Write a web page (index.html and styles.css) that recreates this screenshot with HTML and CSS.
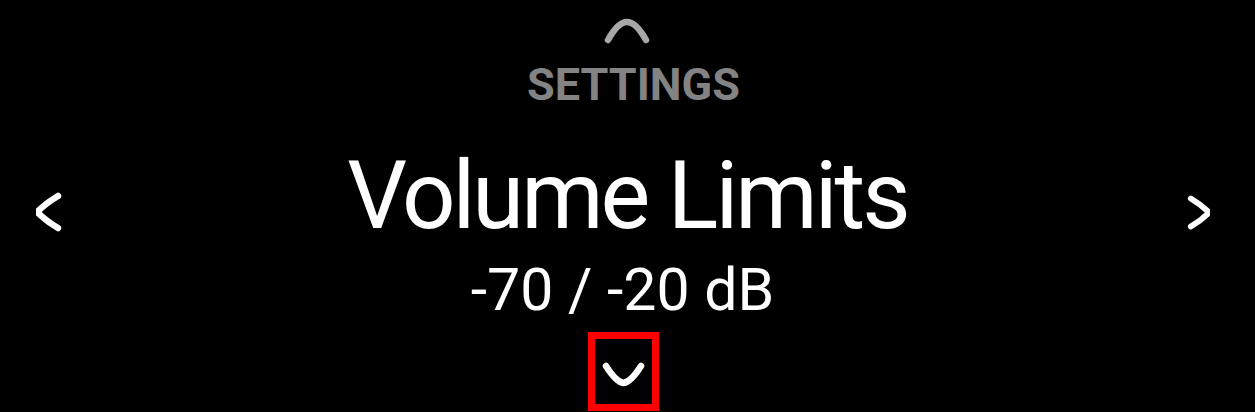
FILE: index.html
```html
<!DOCTYPE html>
<html>
<head>
<meta charset="utf-8">
<link rel="stylesheet" href="styles.css">
</head>
<body>
<div class="screen">
  <div class="side side-left">
    <svg class="chev-side" width="40" height="50" viewBox="0 0 40 50"><path d="M22 5 Q10 12 1 21 Q10 30 22 37" /></svg>
  </div>
  <div class="center">
    <svg class="chev-up" width="50" height="50" viewBox="0 0 50 50"><path d="M8 40 Q18 22 27 22 Q36 22 46 40" /></svg>
    <div class="category">SETTINGS</div>
    <div class="title">Volume Limits</div>
    <div class="value">-70 / -20 dB</div>
    <div class="focus">
      <svg class="chev-down" width="57" height="65" viewBox="0 0 57 65"><path d="M11 27 Q21 43 28.5 44 Q36 43 46 27" /></svg>
    </div>
  </div>
  <div class="side side-right">
    <svg class="chev-side" width="40" height="50" viewBox="0 0 40 50"><path d="M18 5 Q30 12 39 21 Q30 30 18 37" /></svg>
  </div>
</div>
</body>
</html>
```
FILE: styles.css
```css
html, body {
  margin: 0;
  padding: 0;
  background: #000;
}
.screen {
  width: 1255px;
  height: 412px;
  background: #000;
  display: grid;
  grid-template-columns: 80px 1fr 80px;
  font-family: Roboto, "Liberation Sans", sans-serif;
  color: #fff;
  overflow: hidden;
}
.side {
  display: flex;
  align-items: flex-start;
  padding-top: 191px;
}
.side-left { padding-left: 36px; }
.side-right { justify-content: flex-end; padding-right: 45px; }
svg path {
  fill: none;
  stroke-width: 6.5;
  stroke-linecap: round;
  stroke-linejoin: round;
}
.chev-side path { stroke: #fff; }
.chev-up path { stroke: #a8a8a8; }
.chev-down path { stroke: #fff; }
.center {
  display: flex;
  flex-direction: column;
  align-items: center;
}
.chev-up {
  display: block;
  margin-left: -6px;
}
.category {
  font-size: 45px;
  font-weight: 700;
  color: #838383;
  line-height: 52px;
  margin-top: 9px;
  margin-left: 12px;
}
.title {
  font-size: 94px;
  letter-spacing: -3px;
  line-height: 100px;
  margin-top: 35px;
}
.value {
  font-size: 59px;
  line-height: 60px;
  margin-top: 14px;
  margin-left: -10px;
}
.focus {
  width: 57px;
  height: 65px;
  border: 7px solid #ff0000;
  margin-top: 12px;
  margin-left: -9px;
}
.chev-down { display: block; }
```
